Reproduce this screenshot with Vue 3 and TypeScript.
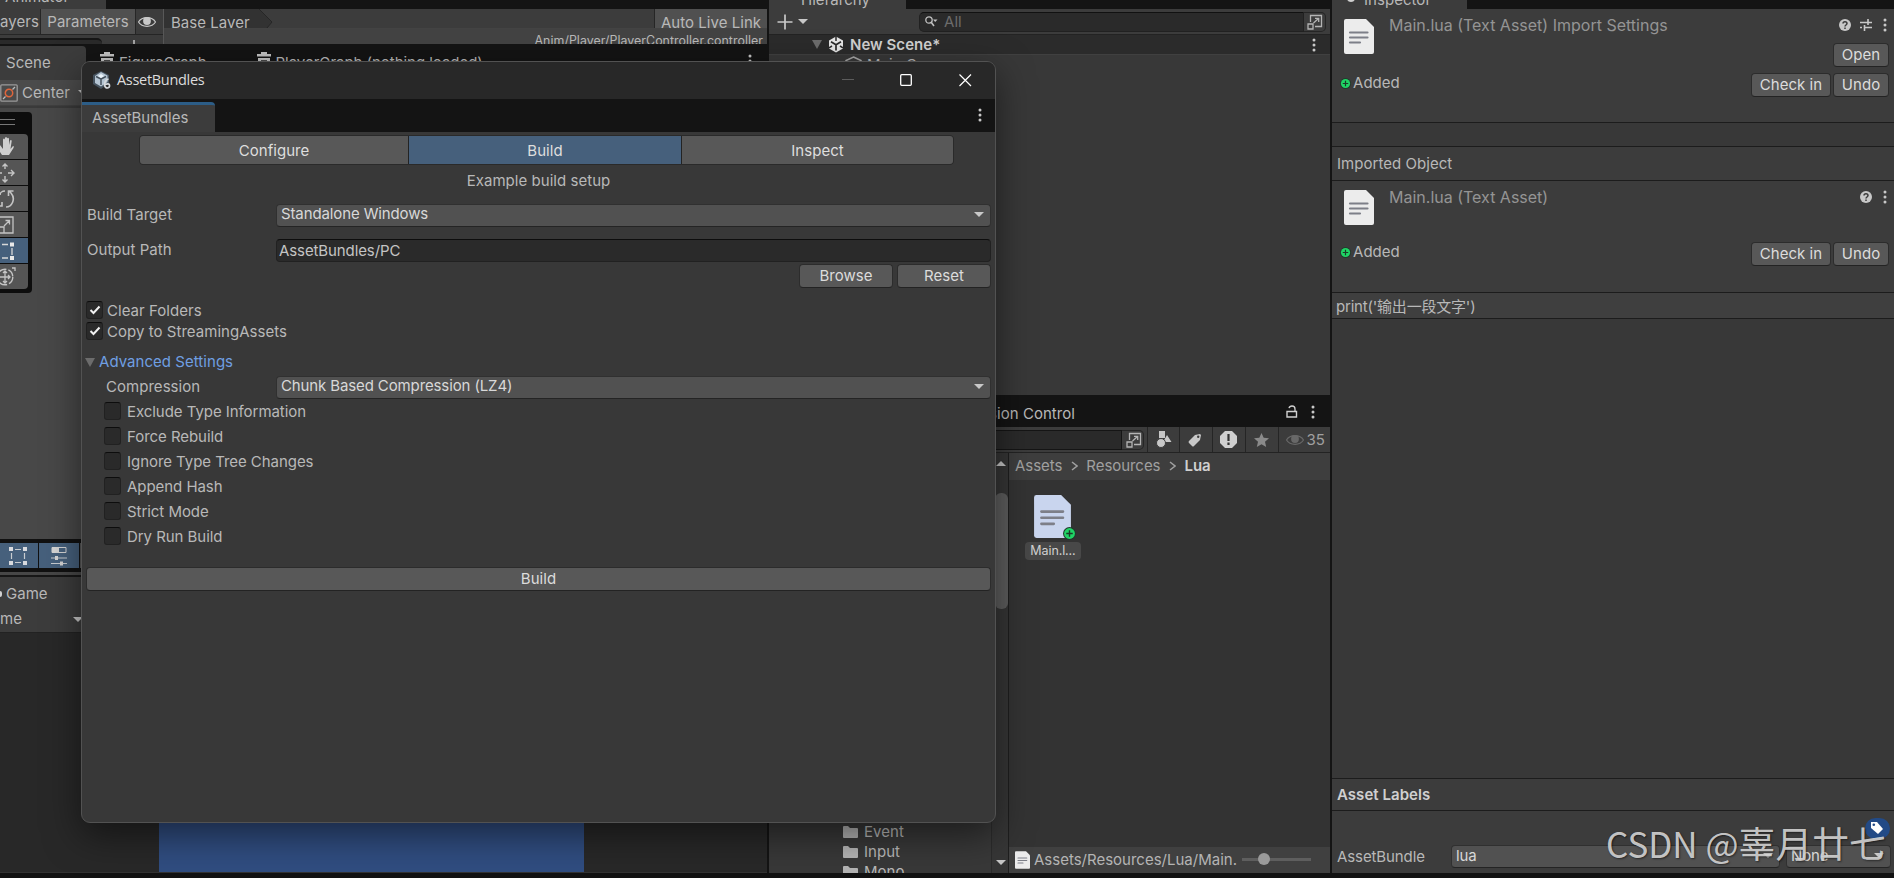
<script setup lang="ts">
interface Toggle { label: string; on?: boolean }
const folderToggles: Toggle[] = [
  { label: 'Clear Folders', on: true },
  { label: 'Copy to StreamingAssets', on: true },
]
const advancedToggles: Toggle[] = [
  { label: 'Exclude Type Information' },
  { label: 'Force Rebuild' },
  { label: 'Ignore Type Tree Changes' },
  { label: 'Append Hash' },
  { label: 'Strict Mode' },
  { label: 'Dry Run Build' },
]
const folders: string[] = ['Event', 'Input', 'Mono']
</script>

<template>
  <div class="editor">
    <svg class="defs" width="0" height="0">
      <symbol id="kebab" viewBox="0 0 4 14"><g fill="#c8c8c8"><circle cx="2" cy="2" r="1.5" /><circle cx="2" cy="7" r="1.5" /><circle cx="2" cy="12" r="1.5" /></g></symbol>
      <symbol id="doc" viewBox="0 0 30 35">
        <path d="M2 0H22L30 8V33a2 2 0 0 1-2 2H2a2 2 0 0 1-2-2V2a2 2 0 0 1 2-2z" fill="currentColor" />
        <path d="M6 13.5H23.500M6 18.500H23.500M6 23.500H16" stroke="#7d7f88" stroke-width="2.200" stroke-linecap="round" />
      </symbol>
      <symbol id="plus" viewBox="0 0 12 12"><circle cx="6" cy="6" r="6" fill="#22392c" /><circle cx="6" cy="6" r="5" fill="#1fd465" /><path d="M6 3V9M3 6H9" stroke="#1c3a28" stroke-width="1.300" /></symbol>
      <symbol id="help" viewBox="0 0 12 12"><circle cx="6" cy="6" r="6" fill="#c8c8c8" /><path d="M4 4.600C4 2 8 2 8 4.600C8 6 6 6 6 7.500M6 8.400V9.900" fill="none" stroke="#3c3c3c" stroke-width="1.500" /></symbol>
      <symbol id="popout" viewBox="0 0 16 16"><path d="M3.500 8V1.500H14.500V12.500H8" fill="none" stroke="#b4b4b4" stroke-width="1.300" /><path d="M1 10H6V15H1zM6.500 9L11.500 4.500M8 4.300H11.700V8" fill="none" stroke="#b4b4b4" stroke-width="1.300" /></symbol>
      <symbol id="clip" viewBox="0 0 14 14"><path d="M0 2H4V0H10V2H14V4.500H0zM1 6H13V14H1z" fill="#c4c4c4" /><path d="M4 9H10" stroke="#222" stroke-width="1.500" /></symbol>
      <symbol id="eye" viewBox="0 0 18 12"><path d="M.5 6C4 .2 14 .2 17.500 6C14 11.800 4 11.800 .5 6z" fill="none" stroke="currentColor" stroke-width="1.200" /><circle cx="9" cy="5" r="3.900" fill="currentColor" /></symbol>
    </svg>

    <main class="columns">
      <!-- Animator, Scene and Game panels -->
      <section class="left">
        <div class="strip"><div class="stub animator"><span>Animator</span></div></div>
        <div class="anim">
          <div class="anim-side">
            <div class="anim-tabs">
              <span class="layers">ayers</span><span class="params">Parameters</span>
              <span class="eyebox"><svg width="18" height="12"><use href="#eye" /></svg></span>
            </div>
            <div class="anim-search"><i class="field"></i><svg width="12" height="10"><path d="M6 2V10" stroke="#c8c8c8" stroke-width="1.500" /></svg></div>
          </div>
          <div class="anim-main">
            <div class="crumbs">
              <span class="base">Base Layer</span>
              <svg width="14" height="25"><path d="M0 0L13 13L3 25H0z" fill="#323232" /><path d="M0 0L13 13L3 25" fill="none" stroke="#262626" /></svg>
              <span class="live">Auto Live Link</span>
            </div>
            <div class="anim-path"><span>Anim/Player/PlayerController.controller</span></div>
          </div>
        </div>
        <div class="scene-tabs">
          <span class="scene-tab">Scene</span>
          <svg class="g1" width="14" height="14"><use href="#clip" /></svg><span class="gt">FigureGraph</span>
          <svg class="g2" width="14" height="14"><use href="#clip" /></svg><span class="gt">PlayerGraph (nothing loaded)</span>
          <svg class="g3" width="4" height="14"><use href="#kebab" /></svg>
        </div>
        <div class="scene-bar">
          <svg width="18" height="18" viewBox="0 0 18 18"><rect x=".8" y=".8" width="16.400" height="16.400" rx="1" fill="none" stroke="#9a9a9a" stroke-width="1.300" /><circle cx="9" cy="9" r="3.700" fill="none" stroke="#e0663c" stroke-width="1.500" /><path d="M3 15L5.500 12.500M12.500 5.500L15 3" stroke="#bbb" stroke-width="1.300" /></svg>
          <span>Center</span><i class="caret"></i>
        </div>
        <div class="scene-view">
          <div class="palette">
            <div class="grip"></div>
            <div class="tool"><svg width="28" height="25"><path d="M0 11L3 15V5.500Q4 3.500 5 5.500V10V4Q6 2 7 4V10V4.500Q8.200 3 9 4.800V11L10 6.500Q11.500 5.500 11.700 7L10.500 15L13 12Q14.500 12 13.500 14L9 21H2L0 18z" fill="#cfcfcf" /></svg></div>
            <div class="tool"><svg width="28" height="25"><path d="M5 9V4M2.500 6.500L5 4L7.500 6.500M5 16V22M2.500 19.500L5 22L7.500 19.500M8 13H14M11 10L14 13L11 16M0 13H2" fill="none" stroke="#c4c4c4" stroke-width="1.400" /></svg></div>
            <div class="tool"><svg width="28" height="25"><path d="M6 21C12 21 16 13 11 7L9 5M8.500 10V5H13.500M5 5C2 5 0 7 0 9M0 20H2V16" fill="none" stroke="#c4c4c4" stroke-width="1.600" /></svg></div>
            <div class="tool"><svg width="28" height="25"><path d="M0 5H13V21H4V15H0M4 15V21H0M4 14L9.500 8.500M5.500 8.500H9.500V12.500" fill="none" stroke="#c4c4c4" stroke-width="1.300" /></svg></div>
            <div class="tool active"><svg width="28" height="25"><path d="M2 6.500H8M2 20H8M12 10V17" stroke="#d8d8d8" stroke-width="1.300" /><path d="M10 4.500H14V8.500H10zM10 18H14V22H10z" fill="#e8e8e8" /></svg></div>
            <div class="tool"><svg width="28" height="25"><circle cx="5" cy="13" r="7.800" fill="none" stroke="#c4c4c4" stroke-width="1.400" stroke-dasharray="8 2" /><path d="M5 7V19M0 13H10M3 9L5 7L7 9M3 17L5 19L7 17M8 11L10 13L8 15M12 4H15V7" fill="none" stroke="#c4c4c4" stroke-width="1.300" /></svg></div>
          </div>
          <div class="overlays">
            <span class="ov ov1"><svg width="20" height="20"><path d="M7 3.500H13M7 16.500H13M3.500 7V13M16.500 7V13" stroke="#c8ccd0" stroke-width="1.200" /><path d="M1 1H5V5H1zM15 1H19V5H15zM1 15H5V19H1zM15 15H19V19H15z" fill="#d8dade" /></svg></span>
            <span class="ov ov2"><svg width="16" height="20"><path d="M1 1.500H15V6.500H1z" fill="none" stroke="#d4d4d4" /><path d="M1 1H8V7H1z" fill="#d4d4d4" /><path d="M0 12H16M0 17.500H16" stroke="#c8ccd0" stroke-width="1.200" /><path d="M4 10H7V14H4zM9 15.500H12V19.500H9z" fill="#d4d4d4" /></svg></span>
            <span class="ov3"></span>
          </div>
        </div>
        <div class="game-tab"><i></i><span>Game</span></div>
        <div class="game-bar"><span>me</span><i class="caret"></i></div>
        <div class="game-view"><div class="quad"></div></div>
      </section>

      <!-- Hierarchy and Project panels -->
      <section class="middle">
        <div class="strip"><div class="stub hier"><span>Hierarchy</span></div></div>
        <div class="hier-bar">
          <svg width="16" height="16"><path d="M8 .5V15.500M.5 8H15.500" stroke="#c8c8c8" stroke-width="1.700" /></svg><i class="caret"></i>
          <div class="search"><svg width="13" height="11"><circle cx="4" cy="4" r="3.200" fill="none" stroke="#c0c0c0" stroke-width="1.300" /><path d="M6 6L9 10" stroke="#c0c0c0" stroke-width="1.500" /><path d="M8 3.500H12.500L10.200 6z" fill="#c0c0c0" /></svg><span>All</span></div>
          <div class="pop"><svg width="16" height="16"><use href="#popout" /></svg></div>
        </div>
        <div class="scene-row">
          <i class="fold"></i>
          <svg width="16" height="17" viewBox="0 0 16 17"><path d="M8 .5L15 4.500V12.500L8 16.500L1 12.500V4.500z" fill="#e6e6e6" /><path d="M8 8.800V14.500M8 8.800L3 5.800M8 8.800L13 5.800" stroke="#2a2a2a" stroke-width="1.700" /><path d="M8 0V5M1 11.800L4 10M15 11.800L12 10" stroke="#2a2a2a" stroke-width="1.500" /></svg>
          <b>New Scene*</b><svg class="end" width="4" height="14"><use href="#kebab" /></svg>
        </div>
        <div class="hier-body">
          <svg width="17" height="16"><path d="M8.500 1L16 4.500V12L8.500 15.500L1 12V4.500z" fill="none" stroke="#a8a8a8" stroke-width="1.500" /></svg><span>Main Camera</span>
        </div>
        <div class="project-tabs">
          <span>Version Control</span>
          <svg class="lock" width="12" height="13"><path d="M1 6.500H10.500V12H1z" fill="none" stroke="#d0d0d0" stroke-width="1.400" /><path d="M3 3.200Q3.500 1 6 1Q9 1 9 4V6" fill="none" stroke="#d0d0d0" stroke-width="1.300" /></svg>
          <svg width="4" height="14"><use href="#kebab" /></svg>
        </div>
        <div class="project-bar">
          <div class="pfield"></div><div class="pop"><svg width="16" height="16"><use href="#popout" /></svg></div>
          <span class="pb first"><svg width="16" height="17"><path d="M3 0H9V7H3zM11 4L15.500 11H7z" fill="#c8c8c8" /><circle cx="5" cy="12" r="4.500" fill="#c8c8c8" stroke="#3c3c3c" /></svg></span>
          <span class="pb"><svg width="14" height="14"><path d="M1 8L7 2L12 1L13 2L12 7L6 13Q5 14 4 13L1 10Q0 9 1 8z" fill="#c8c8c8" /><circle cx="10.200" cy="3.800" r="1.200" fill="#3c3c3c" /></svg></span>
          <span class="pb"><svg width="17" height="17"><path d="M5 0H12L17 5V12L12 17H5L0 12V5z" fill="#d0d0d0" /><path d="M8.500 3V10M8.500 11.500V14" stroke="#333" stroke-width="2.200" /></svg></span>
          <span class="pb"><svg width="15" height="14"><path d="M7.500 0L9.700 4.700L15 5.300L11 8.800L12.200 14L7.500 11.300L2.800 14L4 8.800L0 5.300L5.300 4.700z" fill="#8a8a8a" /></svg></span>
          <span class="pb hidden-count"><svg width="18" height="12"><use href="#eye" /></svg>35</span>
        </div>
        <div class="project-body">
          <div class="tree">
            <div v-for="f in folders" :key="f" class="folder"><svg width="15" height="12"><path d="M0 1Q0 0 1 0H5L7 2H14Q15 2 15 3V11Q15 12 14 12H1Q0 12 0 11z" fill="#b4b4b4" /></svg><span>{{ f }}</span></div>
          </div>
          <div class="scroll"><i class="up"></i><div class="thumb"></div><i class="caret"></i></div>
          <div class="assets">
            <div class="path"><span>Assets</span><svg width="7" height="10"><path d="M1 1L6 5L1 9" fill="none" stroke="#a0a0a0" stroke-width="1.500" /></svg><span>Resources</span><svg width="7" height="10"><path d="M1 1L6 5L1 9" fill="none" stroke="#a0a0a0" stroke-width="1.500" /></svg><b>Lua</b></div>
            <div class="grid">
              <div class="asset">
                <div class="thumbnail"><svg width="37" height="43" preserveAspectRatio="none"><use href="#doc" /></svg><svg class="badge" width="13" height="13"><use href="#plus" /></svg></div>
                <span>Main.l...</span>
              </div>
            </div>
            <div class="status"><svg width="15" height="18"><use href="#doc" /></svg><span>Assets/Resources/Lua/Main.</span><div class="slider"><i></i></div></div>
          </div>
        </div>
      </section>

      <!-- Inspector panel -->
      <section class="right">
        <div class="strip"><div class="stub insp"><i></i><span>Inspector</span></div></div>
        <div class="head first-head">
          <div class="title"><svg class="docicon" width="30" height="35"><use href="#doc" /></svg><span>Main.lua (Text Asset) Import Settings</span>
            <div class="tools"><svg width="12" height="12"><use href="#help" /></svg><svg width="12" height="12"><path d="M0 3.500H12M0 8.500H2M4 8.500H12M8 0V6M4.500 6V12" stroke="#c8c8c8" stroke-width="1.600" /></svg><svg width="4" height="14"><use href="#kebab" /></svg></div></div>
          <button class="btn open">Open</button>
          <div class="vcs"><svg width="11" height="11"><use href="#plus" /></svg><span>Added</span><button class="btn check">Check in</button><button class="btn undo">Undo</button></div>
        </div>
        <div class="gap"></div>
        <div class="imported">Imported Object</div>
        <div class="head second-head">
          <div class="title"><svg class="docicon" width="30" height="35"><use href="#doc" /></svg><span>Main.lua (Text Asset)</span>
            <div class="tools"><svg width="12" height="12"><use href="#help" /></svg><svg width="4" height="14"><use href="#kebab" /></svg></div></div>
          <div class="vcs"><svg width="11" height="11"><use href="#plus" /></svg><span>Added</span><button class="btn check">Check in</button><button class="btn undo">Undo</button></div>
        </div>
        <div class="source">print('输出一段文字')</div>
        <div class="filler"></div>
        <div class="labels-title">Asset Labels</div>
        <div class="labels">
          <div class="tag"><svg width="14" height="14" viewBox="0 0 14 14"><path d="M1 1H7L13 8L8 13L1 7z" fill="#fff" /><circle cx="3.800" cy="3.800" r="1.300" fill="#224a86" /></svg></div>
          <div class="bundle"><span>AssetBundle</span><div class="drop name">lua<i class="caret"></i></div><div class="drop variant">None<i class="caret"></i></div></div>
        </div>
      </section>
    </main>
    <div class="bottom"></div>

    <div class="window">
      <header class="titlebar">
        <svg width="19" height="19" viewBox="0 0 19 19"><path d="M9 0L17 4V12L9 18L1 13V4z" fill="#46535f" /><path d="M9 1L15.500 4.500V11L9 15.500L3 12V5z" fill="#b4c4d2" /><path d="M9 8V14M9 8L4 5.500M9 8L14 5.500" stroke="#45515c" stroke-width="1.500" /><path d="M9 3L12 5L9 7L6 5z" fill="#eaf4fa" /><path d="M16.500 8Q12.500 9 12.500 14Q13 17 15.500 17Q18 16.500 17.500 14Q17 12 13 13.500" fill="none" stroke="#d4d8dc" stroke-width="1.600" /></svg>
        <span>AssetBundles</span>
        <svg class="controls" width="132" height="14"><path d="M0 6.500H12" stroke="#5c5c5c" /><rect x="58.700" y="1.700" width="10.600" height="10.600" rx="1" fill="none" stroke="#fff" stroke-width="1.300" /><path d="M117.500 1.500L129 13M129 1.500L117.500 13" stroke="#fff" stroke-width="1.200" /></svg>
      </header>
      <div class="tabs"><div class="tab">AssetBundles</div><svg width="4" height="14"><use href="#kebab" /></svg></div>
      <div class="modes"><span class="m1">Configure</span><span class="m2">Build</span><span class="m3">Inspect</span></div>
      <div class="caption">Example build setup</div>
      <div class="row target"><label>Build Target</label><div class="drop">Standalone Windows<i class="caret"></i></div></div>
      <div class="row output"><label>Output Path</label><div class="input">AssetBundles/PC</div></div>
      <div class="actions"><button class="btn">Browse</button><button class="btn">Reset</button></div>
      <div class="toggles">
        <div v-for="t in folderToggles" :key="t.label" class="toggle"><span class="box"><svg v-if="t.on" width="12" height="10"><path d="M1.500 5L4.500 8L10.500 1.500" fill="none" stroke="#f0f0f0" stroke-width="2" /></svg></span><span>{{ t.label }}</span></div>
      </div>
      <div class="advanced"><i class="fold"></i><span>Advanced Settings</span></div>
      <div class="row compression"><label>Compression</label><div class="drop">Chunk Based Compression (LZ4)<i class="caret"></i></div></div>
      <div class="toggles adv">
        <div v-for="t in advancedToggles" :key="t.label" class="toggle"><span class="box"></span><span>{{ t.label }}</span></div>
      </div>
      <button class="btn build">Build</button>
    </div>

    <div class="watermark">CSDN @<span>辜月廿七</span></div>
  </div>
</template>

<style>
body { margin: 0; overflow: hidden; background: #141414; }
</style>

<style scoped>
* { box-sizing: border-box; }
.editor { position: relative; width: 1894px; height: 878px; overflow: hidden; display: flex; flex-direction: column; background: #141414; color: #b8b8b8; font: 15px/20px Inter, "Noto Sans CJK SC", sans-serif; letter-spacing: .04px; white-space: nowrap; }
.editor svg { display: block; flex: none; }
.defs { position: absolute; }
.columns { display: flex; height: 873px; gap: 2px; }
.bottom { height: 5px; background: #121212; }
section { display: flex; flex-direction: column; flex: none; overflow: hidden; }
.left { width: 767px; } .middle { width: 561px; } .right { width: 562px; }
section > div { flex: none; }
.caret { width: 0; height: 0; border: 5px solid transparent; border-top: 5.500px solid #c8c8c8; border-bottom: 0; flex: none; }
.fold { width: 0; height: 0; border: 5.500px solid transparent; border-top: 9px solid #6c6c6c; border-bottom: 0; flex: none; }
.btn { font: inherit; letter-spacing: inherit; color: #dcdcdc; background: #585858; border: 1px solid #2c2c2c; border-bottom-color: #232323; border-radius: 4px; padding: 0; text-align: center; }
.drop { display: flex; align-items: center; justify-content: space-between; background: #515151; border: 1px solid #303030; border-bottom-color: #242424; border-radius: 4px; color: #d8d8d8; padding: 0 6px 2px 4px; letter-spacing: -.12px; }

.strip { height: 9px; background: #141414; display: flex; overflow: hidden; }
.stub { background: #3c3c3c; display: flex; align-items: flex-end; height: 9px; }
.stub span { line-height: 20px; margin-bottom: -1px; }
.animator { width: 106px; padding-left: 5px; } .animator span { margin-bottom: 2px; }
.hier { width: 137px; padding-left: 32px; }
.insp { width: 135px; padding-left: 15px; gap: 9px; }
.insp i { width: 8px; height: 8px; border-radius: 50%; background: #d0d0d0; margin-bottom: 7px; }

.anim { height: 35px; display: flex; background: #3c3c3c; overflow: hidden; }
.anim-side { width: 163px; }
.anim-tabs { display: flex; height: 26px; border-bottom: 1px solid #262626; line-height: 26px; }
.layers { width: 41px; padding-right: 6px; text-align: right; border-right: 1px solid #262626; }
.params { width: 95px; text-align: center; background: #505050; border-right: 1px solid #262626; }
.eyebox { padding: 7px 0 0 2px; color: #c8c8c8; }
.anim-search { display: flex; height: 9px; padding-top: 3px; gap: 26px; }
.field { width: 102px; height: 20px; background: #2a2a2a; border-top: 2px solid #171717; border-radius: 0 5px 0 0; }
.anim-main { width: 604px; border-left: 1px solid #585858; }
.crumbs { height: 19px; display: flex; overflow: hidden; line-height: 27px; }
.base { width: 95px; padding-left: 7px; background: #323232; }
.live { margin-left: auto; width: 113px; background: #505050; border-left: 1px solid #262626; text-align: center; }
.anim-path { height: 16px; background: #434343; text-align: right; padding-right: 4px; font-size: 12.400px; line-height: 26px; overflow: hidden; }

.scene-tabs { height: 36px; background: #141414; display: flex; align-items: flex-start; }
.scene-tab { width: 86px; height: 34px; margin-top: 2px; background: #3c3c3c; border-radius: 0 4px 0 0; padding: 7px 0 0 6px; }
.g1 { margin: 8px 5px 0 14px; } .g2 { margin: 8px 5px 0 50px; } .g3 { margin: 10px 15px 0 auto; }
.gt { line-height: 37px; letter-spacing: -.04px; }
.scene-bar { height: 26px; background: #4b4b4b; border-bottom: 1px solid #404040; display: flex; align-items: center; }
.scene-bar span { margin: 0 8px 0 4px; }
.scene-view { height: 469px; background: #484848; border-top: 2px solid #3a3a3a; display: flex; flex-direction: column; justify-content: space-between; align-items: flex-start; padding-top: 4px; }
.palette { width: 32px; height: 181px; background: #0d0d0d; border-radius: 0 4px 4px 0; display: flex; flex-direction: column; gap: 1px; }
.grip { height: 6px; width: 15px; margin: 7px 0 8px; border: 1px solid #777; border-width: 1px 0; }
.tool { width: 28px; height: 25px; background: #555; overflow: hidden; }
.tool:nth-child(2) { border-radius: 0 4px 0 0; } .tool:last-child { border-radius: 0 0 4px 0; }
.tool.active { background: #46607c; }
.overlays { display: flex; width: 90px; height: 36px; background: #111; padding-top: 4px; gap: 1px; border-bottom: 3px solid #474747; }
.ov { background: #46607c; height: 25px; padding-top: 3px; }
.ov1 { width: 38px; padding-left: 8px; } .ov2 { width: 40px; padding-left: 12px; }
.ov3 { width: 10px; height: 25px; background: #555; }
.game-tab { height: 31px; border-top: 2px solid #171717; background: #3c3c3c; display: flex; align-items: center; padding-top: 4px; gap: 4px; }
.game-tab i { width: 2px; height: 6px; background: #d0d0d0; border-radius: 0 4px 4px 0; }
.game-bar { height: 27px; background: #3c3c3c; border-bottom: 1px solid #222; display: flex; align-items: center; gap: 51px; }
.game-view { height: 240px; background: #282828; border-bottom: 1px solid #333; padding: 150px 0 0 159px; }
.quad { width: 425px; height: 89px; background: #304d80; }

.hier-bar { height: 26px; display: flex; align-items: center; background: #3c3c3c; padding-left: 8px; border-bottom: 1px solid #232323; }
.hier-bar .caret { margin-left: 5px; }
.search { margin-left: 111px; width: 385px; height: 20px; background: #2a2a2a; border: 1px solid #212121; border-top-color: #111; border-radius: 5px 0 0 5px; display: flex; align-items: center; padding-left: 5px; gap: 6px; color: #6c6c6c; }
.pop { width: 22px; height: 20px; border: 1px solid #252525; border-left: 0; border-radius: 0 5px 5px 0; padding: 1px 3px; background: #3c3c3c; }
.scene-row { height: 20px; background: #2b2b2b; border-bottom: 1px solid #404040; display: flex; align-items: center; padding-left: 43px; color: #d0d0d0; }
.scene-row > svg:nth-child(2) { margin: 0 6px 0 6px; }
.scene-row .end { margin: 0 14px 0 auto; }
b { font-weight: 600; }
.hier-body { height: 340px; background: #383838; display: flex; padding-left: 76px; gap: 5px; }
.hier-body svg { margin-top: 1px; }
.hier-body span { line-height: 19px; }
.project-tabs { height: 32px; background: #141414; display: flex; align-items: center; padding: 5px 0 0 196px; }
.project-tabs .lock { margin: 0 13px 4px auto; } .project-tabs > svg:last-child { margin: 0 15px 3px 0; }
.project-bar { height: 26px; background: #3c3c3c; border-bottom: 1px solid #232323; display: flex; align-items: center; }
.pfield { width: 354px; height: 20px; background: #2a2a2a; border: 1px solid #151515; }
.project-bar .pop { padding-left: 4px; }
.pb { height: 25px; width: 33px; border-left: 1px solid #252525; display: flex; align-items: center; justify-content: center; }
.pb:not(.first):not(.hidden-count) svg { margin-right: 2px; }
.first { margin-left: 3px; width: 32px; }
.hidden-count { width: 52px; gap: 3px; color: #a0a0a0; justify-content: flex-end; padding-right: 5px; }
.hidden-count svg { color: #686868; }
.project-body { display: flex; height: 420px; background: #333; }
.tree { width: 223px; background: #383838; border-right: 1px solid #2b2b2b; display: flex; flex-direction: column; padding: 369px 0 0 74px; overflow: hidden; }
.folder { display: flex; align-items: center; height: 20px; flex: none; gap: 6px; }
.scroll { width: 17px; background: #363636; border-right: 1px solid #1e1e1e; display: flex; flex-direction: column; align-items: center; padding: 8px 0 8px 2px; }
.up { border: 5px solid transparent; border-bottom: 5.500px solid #c8c8c8; border-top: 0; }
.thumb { width: 13px; height: 116px; margin-top: 27px; background: #5e5e5e; border-radius: 6px; }
.scroll .caret { margin-top: auto; }
.assets { width: 321px; display: flex; flex-direction: column; }
.path { height: 27px; background: #3e3e3e; display: flex; align-items: center; padding: 0 0 1px 6px; color: #a0a0a0; letter-spacing: -.05px; }
.path svg { margin: 0 8px 0 9px; } .path b { color: #d0d0d0; }
.grid { height: 368px; padding: 15px 0 0 16px; }
.asset { width: 56px; display: flex; flex-direction: column; align-items: center; color: #d0d0d0; }
.asset > span { width: 56px; height: 18px; line-height: 18px; margin-top: 4px; background: #484848; border-radius: 4px; text-align: center; font-size: 12.500px; letter-spacing: -.1px; }
.thumbnail { position: relative; color: #c9d5ee; margin-left: -2px; }
.badge { position: absolute; right: -5px; bottom: -2px; }
.status { height: 26px; background: #404040; display: flex; align-items: center; padding-left: 6px; color: #b4b4b4; letter-spacing: 0; }
.status > svg { color: #ececec; margin-right: 4px; }
.slider { width: 69px; height: 3px; background: #5e5e5e; margin: 0 0 1px 5px; padding-left: 16px; }
.slider i { display: block; width: 12px; height: 12px; border-radius: 50%; background: #9a9a9a; margin-top: -5px; }

.right { background: #3c3c3c; }
.head { border-bottom: 1px solid #1c1c1c; display: flex; flex-direction: column; }
.first-head { height: 114px; padding-top: 10px; } .second-head { height: 112px; padding-top: 9px; }
.title { display: flex; height: 35px; padding-left: 12px; color: #949494; font-size: 16px; letter-spacing: 0; }
.title > span { margin: -4px 0 0 15px; }
.second-head .title > span { margin-top: -3px; }
.docicon { color: #ececec; }
.tools { margin: 0 7px 0 auto; height: 12px; display: flex; align-items: center; gap: 9px; }
.tools svg:last-child { margin-left: 2px; }
.second-head .tools { margin-top: 1px; }
.open { width: 56px; height: 24px; margin: -11px 5px 0 auto; flex: none; }
.vcs { display: flex; align-items: center; margin-top: 6px; height: 24px; padding: 0 5px 0 8px; }
.second-head .vcs { margin-top: 17px; }
.vcs svg { margin: -4px 2px 0 0; } .vcs span { margin-top: -4px; margin-right: auto; }
.vcs .btn { height: 24px; } .check { width: 80px; } .undo { width: 56px; margin-left: 2px; }
.gap { height: 24px; background: #383838; border-bottom: 1px solid #1c1c1c; }
.imported { height: 34px; line-height: 33px; padding-left: 5px; border-bottom: 1px solid #1c1c1c; }
.source { height: 26px; line-height: 28px; padding-left: 4px; border-bottom: 1px solid #1c1c1c; background: #3f3f3f; letter-spacing: -.2px; }
.filler { height: 460px; background: #383838; border-bottom: 1px solid #1c1c1c; }
.labels-title { height: 32px; line-height: 31px; padding-left: 5px; font-weight: 600; color: #d0d0d0; border-bottom: 1px solid #1c1c1c; }
.labels { height: 62px; padding-top: 7px; display: flex; flex-direction: column; }
.tag { width: 25px; height: 21px; border-radius: 11px; background: #224a86; margin-left: auto; margin-right: 4px; padding: 3px 5px; }
.bundle { display: flex; align-items: center; padding: 6px 3px 0 5px; }
.bundle .drop { height: 23px; } .bundle > span { width: 114px; letter-spacing: -.1px; }
.name { width: 329px; } .variant { width: 105px; margin-left: 6px; }

/* floating window */
.window { position: absolute; left: 81px; top: 61px; width: 915px; height: 762px; border: 1px solid #525252; border-radius: 9px; background: #383838; overflow: hidden; display: flex; flex-direction: column; box-shadow: 0 12px 36px rgba(0,0,0,.5); }
.window > * { flex: none; }
.titlebar { height: 37px; background: #282828; display: flex; align-items: center; padding: 0 0 1px 10px; color: #dcdcdc; font: 14.500px/20px "Open Sans", sans-serif; letter-spacing: -.3px; }
.titlebar span { margin-left: 6px; }
.controls { margin-left: auto; margin-right: 21px; }
.tabs { height: 33px; background: #141414; display: flex; justify-content: space-between; align-items: flex-end; }
.tab { width: 133px; height: 30px; border-top: 3px solid #2c5d87; border-radius: 0 4px 0 0; background: #3c3c3c; padding: 2px 0 0 10px; line-height: 22px; letter-spacing: -.05px; }
.tabs svg { margin: 0 13px 10px 0; }
.modes { display: flex; margin: 3px 0 0 57px; height: 30px; width: 815px; line-height: 30px; text-align: center; color: #dedede; border: 1px solid #2a2a2a; border-radius: 4px; overflow: hidden; background: #232323; gap: 1px; }
.modes span { background: #585858; } .modes .m2 { background: #46607c; }
.m1 { width: 268px; } .m2 { width: 272px; } .m3 { flex: 1; }
.caption { text-align: center; height: 22px; line-height: 22px; margin-top: 5px; }
.row { display: flex; align-items: center; height: 24px; padding-left: 5px; }
.row label { width: 189px; } .row .drop { width: 715px; height: 23px; }
.target { margin-top: 11px; } .output { margin-top: 11px; }
.input { width: 715px; height: 23px; background: #2a2a2a; border: 1px solid #212121; border-top-color: #0d0d0d; border-radius: 4px; padding-left: 2px; line-height: 22px; color: #c4c4c4; letter-spacing: -.1px; }
.actions { display: flex; justify-content: flex-end; gap: 4px; padding-right: 4px; margin-top: 2px; }
.actions .btn { width: 94px; height: 24px; }
.toggles { margin-top: 13px; padding-left: 4px; display: flex; flex-direction: column; gap: 1px; }
.toggle { height: 20px; display: flex; align-items: center; gap: 4px; }
.box { width: 17px; height: 18px; margin-bottom: 3px; background: #2a2a2a; border: 1px solid #212121; border-top-color: #0d0d0d; border-radius: 3px; padding: 3px 0 0 2px; }
.advanced { margin: 9px 0 0 3px; height: 22px; display: flex; align-items: center; gap: 4px; color: #6f9fe2; }
.compression { margin-top: 2px; padding-left: 24px; } .compression label { width: 170px; }
.adv { margin-top: 3px; padding-left: 22px; gap: 5px; letter-spacing: -.05px; } .adv .toggle { gap: 6px; }
.adv .box { margin-bottom: 2px; }
.build { width: 905px; height: 24px; margin: 20px 0 0 4px; }
.watermark { position: absolute; left: 1606px; top: 820px; height: 44px; line-height: 44px; font-family: "Noto Sans CJK SC", sans-serif; font-size: 35px; letter-spacing: 0; color: rgba(216,216,216,.9); text-shadow: 1px 1px 2px rgba(0,0,0,.5); }
.watermark span { font-size: 36.800px; }
</style>
